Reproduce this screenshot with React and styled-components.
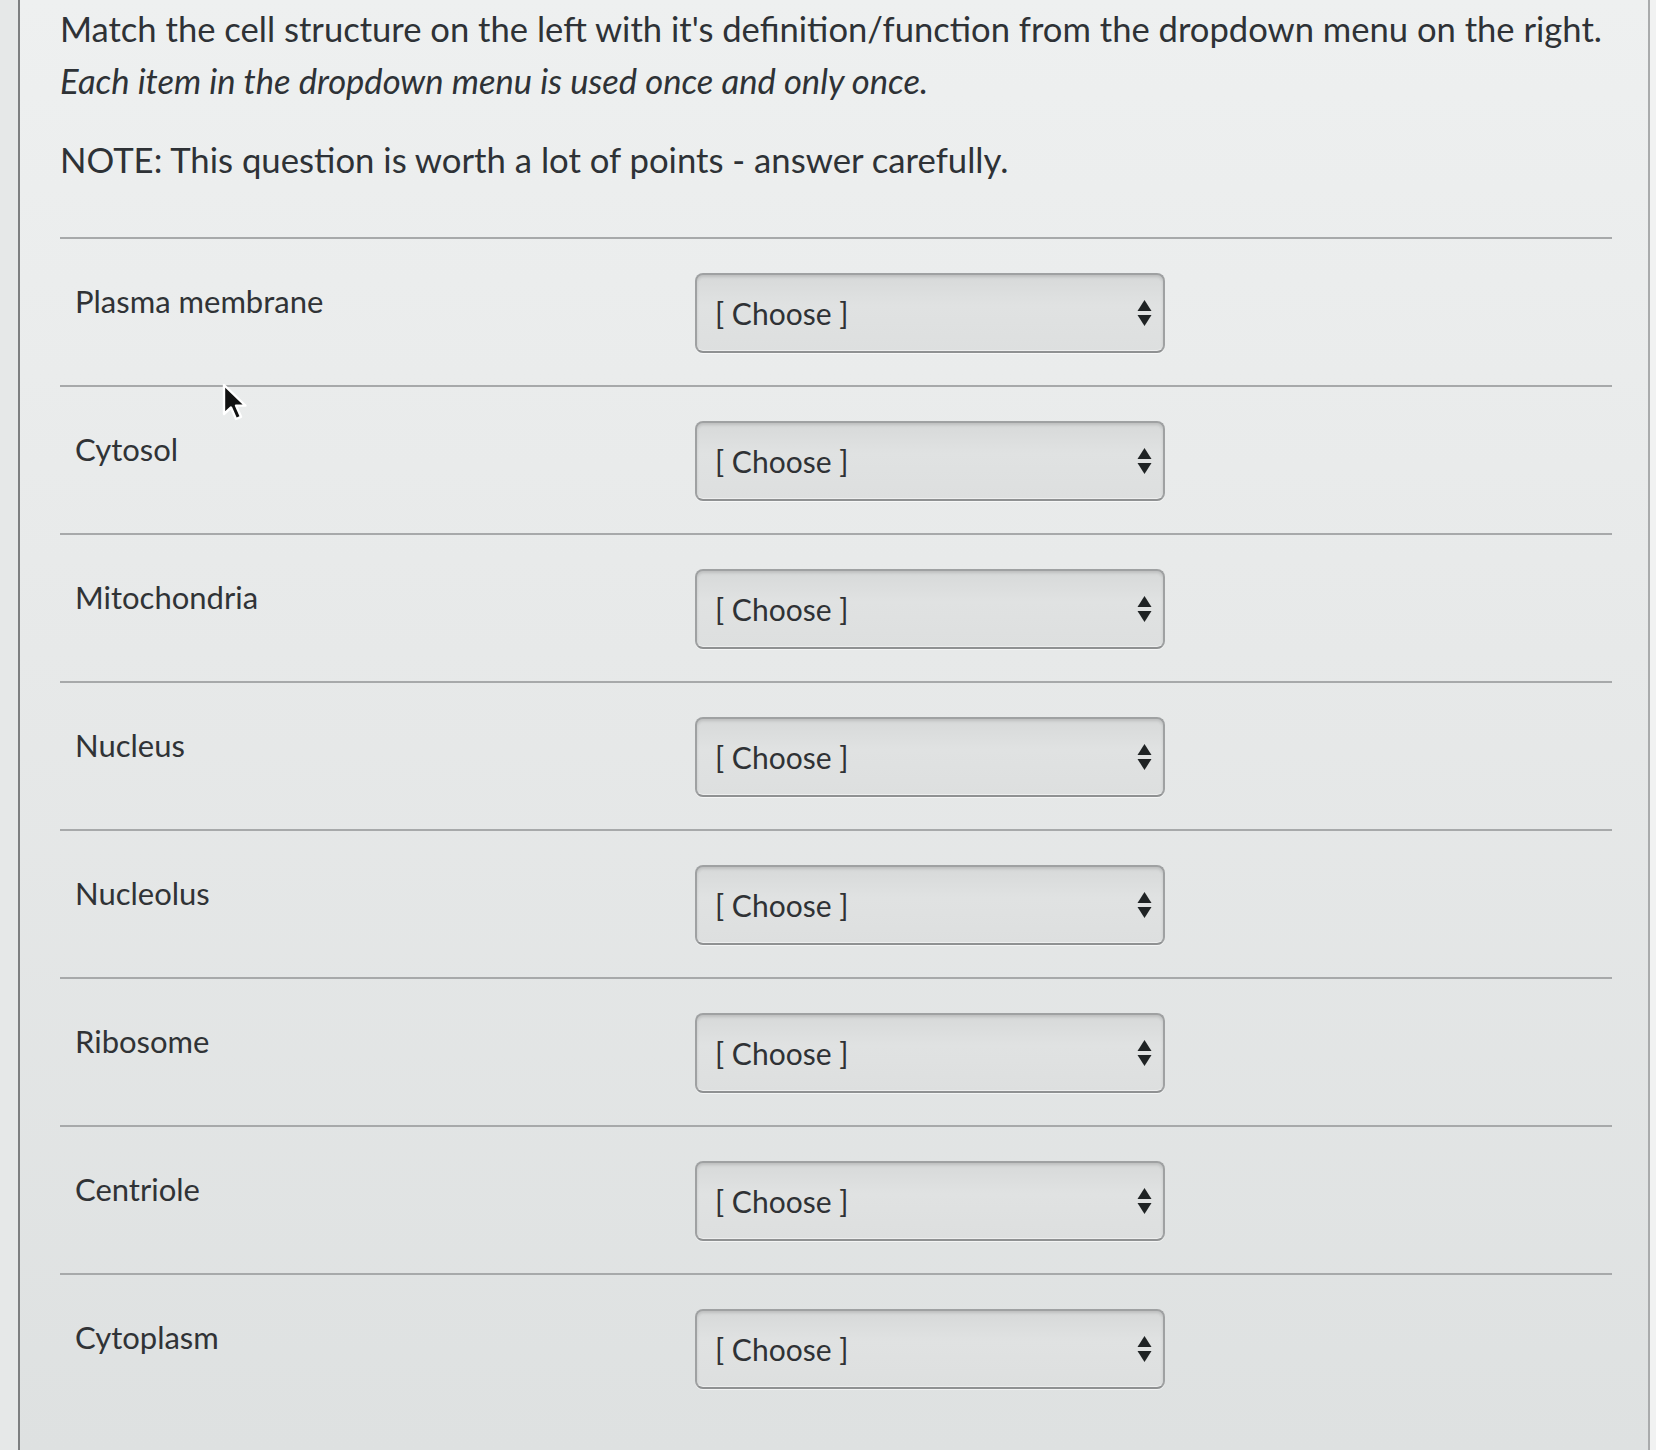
import React from "react";
import styled, { createGlobalStyle } from "styled-components";

const GlobalStyle = createGlobalStyle`
  html, body {
    margin: 0;
    padding: 0;
    background: #e9ebeb;
  }
  body {
    font-family: Lato, "Open Sans", "Liberation Sans", sans-serif;
    color: #2d3034;
  }
`;

const Page = styled.div`
  width: 1656px;
  height: 1450px;
  overflow: hidden;
  position: relative;
  display: flex;
  background: linear-gradient(180deg, #eef0f0 0%, #e7e9e9 45%, #dee1e1 100%);
`;

const Gutter = styled.div`
  width: ${(p) => p.$w}px;
  flex: none;
  background: ${(p) => p.$bg};
`;

const Panel = styled.main`
  flex: 1;
  border-left: 2px solid #7d7f80;
  border-right: 2px solid #a9abac;
  padding: 3px 36px 0 40px;
  box-sizing: border-box;
`;

const Intro = styled.p`
  margin: 0;
  font-size: 34.6px;
  line-height: 52px;
  color: #2e3236;
`;

const Line = styled.span`
  display: block;
  white-space: nowrap;
  font-style: ${(p) => (p.$italic ? "italic" : "normal")};
`;

const Note = styled.p`
  margin: 27px 0 51px;
  font-size: 34.7px;
  line-height: 52px;
  color: #2e3236;
`;

const Rows = styled.div`
  display: flex;
  flex-direction: column;
`;

const Row = styled.div`
  display: flex;
  align-items: flex-start;
  height: 148px;
  box-sizing: border-box;
  border-top: 2px solid #a7a9aa;
  padding-top: 34px;
`;

const Label = styled.div`
  width: 635px;
  flex: none;
  padding-left: 15px;
  margin-top: 10px;
  box-sizing: border-box;
  font-size: 31px;
  line-height: 36px;
  color: #303336;
`;

const Select = styled.div`
  width: 470px;
  height: 80px;
  box-sizing: border-box;
  display: flex;
  align-items: center;
  justify-content: space-between;
  padding: 0 11px 0 18px;
  border: 2px solid #9fa1a2;
  border-bottom-color: #8f9192;
  border-radius: 8px;
  background: linear-gradient(180deg, #d7d9d9 0%, #e0e2e2 40%, #dddfdf 100%);
  box-shadow: inset 0 2px 3px rgba(0, 0, 0, 0.12),
    inset 0 -1px 0 rgba(255, 255, 255, 0.5), 0 1px 0 rgba(255, 255, 255, 0.6);
  font-size: 30px;
  color: #2f3235;
`;

const Placeholder = styled.span`
  line-height: 36px;
`;

const Arrows = styled.svg`
  width: 15px;
  height: 30px;
  flex: none;
`;

const Cursor = styled.svg`
  position: absolute;
  left: 222px;
  top: 383px;
  width: 28px;
  height: 40px;
`;

const items = [
  "Plasma membrane",
  "Cytosol",
  "Mitochondria",
  "Nucleus",
  "Nucleolus",
  "Ribosome",
  "Centriole",
  "Cytoplasm",
];

function SortIcon() {
  return (
    <Arrows viewBox="0 0 15 30" aria-hidden="true">
      <path d="M7.5 2 L14.5 13 L0.5 13 Z" fill="#1f2324" />
      <path d="M0.5 17 L14.5 17 L7.5 28 Z" fill="#1f2324" />
    </Arrows>
  );
}

export default function App() {
  return (
    <>
      <GlobalStyle />
      <Page>
        <Gutter $w={18} $bg="#e6e8e8" />
        <Panel>
          <Intro>
            <Line>
              Match the cell structure on the left with it's definition/function
              from the dropdown menu on the right.
            </Line>
            <Line $italic>Each item in the dropdown menu is used once and only once.</Line>
          </Intro>
          <Note>NOTE: This question is worth a lot of points - answer carefully.</Note>
          <Rows>
            {items.map((name) => (
              <Row key={name}>
                <Label>{name}</Label>
                <Select role="combobox">
                  <Placeholder>[ Choose ]</Placeholder>
                  <SortIcon />
                </Select>
              </Row>
            ))}
          </Rows>
        </Panel>
        <Gutter $w={6} $bg="#f1f2f2" />
        <Cursor viewBox="0 0 28 40" aria-hidden="true">
          <path
            d="M2 2 L2 31 L9 24.5 L14 36 L19 33.8 L14 22.6 L23.5 22.6 Z"
            fill="#111"
            stroke="#fff"
            strokeWidth="2.4"
            strokeLinejoin="round"
          />
        </Cursor>
      </Page>
    </>
  );
}
